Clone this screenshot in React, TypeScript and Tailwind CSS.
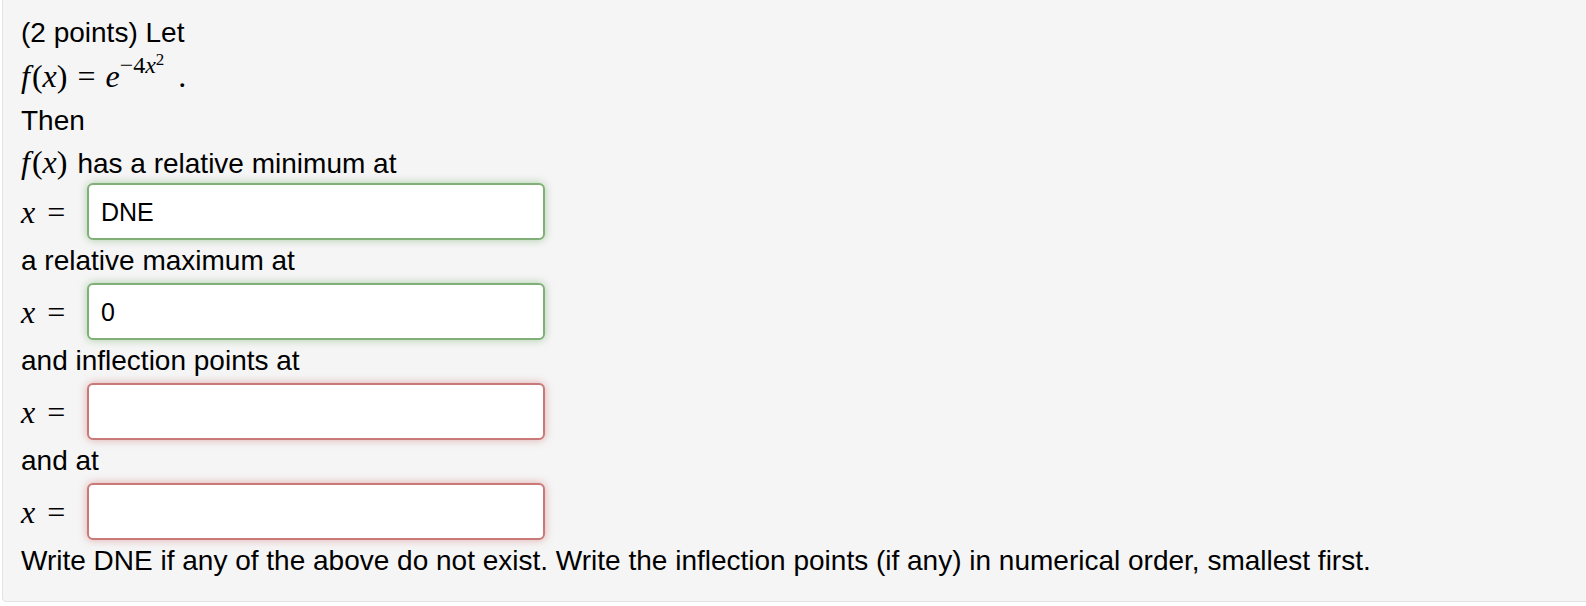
const serif = "font-['Liberation_Serif','Times_New_Roman',serif]";

function Fx() {
  return (
    <span className={`${serif} text-[32px] leading-none`}>
      <span className="italic">f</span>
      <span className="ml-[2px]">(</span>
      <span className="italic">x</span>
      <span>)</span>
    </span>
  );
}

function AnswerRow({ value, status }: { value: string; status: 'ok' | 'bad' }) {
  const box =
    status === 'ok'
      ? 'border-[#80b077] shadow-[0_0_8px_rgba(110,170,100,0.55)]'
      : 'border-[#c97a78] shadow-[0_0_8px_rgba(205,110,110,0.55)]';
  return (
    <div className="flex h-[57px] items-center">
      <div className="flex w-[66px] items-center">
        <span className={`${serif} text-[32px] leading-none`}>
          <span className="italic">x</span>
          <span className="ml-[12px]">=</span>
        </span>
      </div>
      <div
        className={`flex h-[57px] w-[458px] items-center rounded-[6px] border-2 bg-white px-[12px] text-[25px] ${box}`}
      >
        {value}
      </div>
    </div>
  );
}

function TextRow({ children }: { children: React.ReactNode }) {
  return <div className="h-[43px] leading-[41px]">{children}</div>;
}

export default function App() {
  return (
    <div className="min-h-screen overflow-hidden bg-white font-['Liberation_Sans',Arial,sans-serif] text-[#000]">
      <div className="ml-[2px] mr-[-10px] mt-[-10px] rounded-[4px] border border-[#e3e3e3] bg-[#f5f5f5] pb-[25px] pl-[18px] pt-[22px] text-[28px] leading-[40px]">
        <div className="h-[40px]">(2 points) Let</div>
        <div className="h-[46px] pt-[5px]">
          <span className={`${serif} text-[32px] leading-none`}>
            <span className="italic">f</span>
            <span className="ml-[2px]">(</span>
            <span className="italic">x</span>
            <span>)</span>
            <span className="mx-[10px]">=</span>
            <span className="italic">e</span>
            <span className="relative top-[-14px] text-[24px]">
              −4<span className="italic">x</span>
              <span className="relative top-[-8px] text-[17px]">2</span>
            </span>
            <span className="ml-[14px]">.</span>
          </span>
        </div>
        <div className="h-[40px] leading-[44px]">Then</div>
        <div className="h-[44px] pt-[5px]">
          <Fx />
          <span className="ml-[10px]">has a relative minimum at</span>
        </div>
        <AnswerRow value="DNE" status="ok" />
        <TextRow>a relative maximum at</TextRow>
        <AnswerRow value="0" status="ok" />
        <TextRow>and inflection points at</TextRow>
        <AnswerRow value="" status="bad" />
        <TextRow>and at</TextRow>
        <AnswerRow value="" status="bad" />
        <div className="h-[36px] leading-[42px]">
          Write DNE if any of the above do not exist. Write the inflection points (if any) in numerical order, smallest first.
        </div>
      </div>
    </div>
  );
}
